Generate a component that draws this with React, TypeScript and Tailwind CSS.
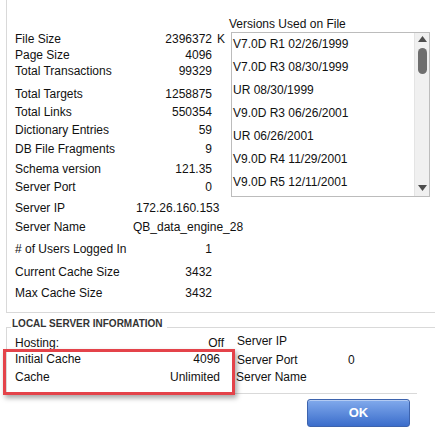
import React from "react";

type Stat = {
    label: string;
    value: string;
    unit?: string;
    mt: string;
    left?: string;
};

// file statistics, top-left column
const stats: Stat[] = [
    { label: "File Size", value: "2396372", unit: "K", mt: "mt-0" },
    { label: "Page Size", value: "4096", mt: "mt-0" },
    { label: "Total Transactions", value: "99329", mt: "mt-0" },
    { label: "Total Targets", value: "1258875", mt: "mt-[7px]" },
    { label: "Total Links", value: "550354", mt: "mt-[2px]" },
    { label: "Dictionary Entries", value: "59", mt: "mt-[2px]" },
    { label: "DB File Fragments", value: "9", mt: "mt-[3px]" },
    { label: "Schema version", value: "121.35", mt: "mt-[4px]" },
    { label: "Server Port", value: "0", mt: "mt-[2px]" },
    { label: "Server IP", value: "172.26.160.153", mt: "mt-[5px]", left: "pl-[2px]" },
    { label: "Server Name", value: "QB_data_engine_28", mt: "mt-[3px]", left: "-ml-[1px]" },
    { label: "# of Users Logged In", value: "1", mt: "mt-[6px]" },
    { label: "Current Cache Size", value: "3432", mt: "mt-[7px]" },
    { label: "Max Cache Size", value: "3432", mt: "mt-[5px]" },
];

const versions = [
    "V7.0D R1 02/26/1999",
    "V7.0D R3 08/30/1999",
    "UR 08/30/1999",
    "V9.0D R3 06/26/2001",
    "UR 06/26/2001",
    "V9.0D R4 11/29/2001",
    "V9.0D R5 12/11/2001",
];

function Scrollbar() {
    return (
        <div className="w-[15px] bg-[#f0f0f0] border-l border-[#e4e4e4] flex flex-col items-center pt-[3px] pb-[5px]">
            <svg width="9" height="6" viewBox="0 0 9 6">
                <path d="M4.5 0 L9 6 L0 6 Z" fill="#4d4d4d" />
            </svg>
            <div className="mt-[6px] w-[9px] h-[26px] rounded-full bg-[#6e6e6e]" />
            <div className="flex-1" />
            <svg width="9" height="6" viewBox="0 0 9 6">
                <path d="M0 0 L9 0 L4.5 6 Z" fill="#4d4d4d" />
            </svg>
        </div>
    );
}

export default function App() {
    return (
        <div className="relative w-[435px] h-[441px] overflow-hidden bg-white text-[12px] leading-4 text-[#111] font-['Liberation_Sans',Arial,sans-serif]">
            {/*file info group*/}
            <div className="ml-[6px] h-[313px] flex border-l border-b border-[#d9d9d9]">
                <div className="w-[222px] pl-[8px] pt-[31px]">
                    {stats.map((s) => (
                        <div key={s.label} className={`flex h-4 whitespace-nowrap ${s.mt}`}>
                            <span className="w-[119px] shrink-0">{s.label}</span>
                            {s.left ? (
                                <span className={s.left}>{s.value}</span>
                            ) : (
                                <span className="w-[78px] shrink-0 text-right">{s.value}</span>
                            )}
                            {s.unit && <span className="ml-[5px]">{s.unit}</span>}
                        </div>
                    ))}
                </div>

                {/*versions list*/}
                <div className="w-[201px] pt-[16px]">
                    <div className="h-4 whitespace-nowrap">Versions Used on File</div>
                    <div className="ml-[2px] h-[165px] flex border border-[#bcbcbc]">
                        <ul className="flex-1 pl-[1px] overflow-hidden">
                            {versions.map((v) => (
                                <li key={v} className="h-[23px] leading-[23px] whitespace-nowrap">{v}</li>
                            ))}
                        </ul>
                        <Scrollbar />
                    </div>
                </div>
            </div>
            {/*file info group end*/}

            {/*local server information*/}
            <div className="ml-[6px] h-[15px] flex items-end">
                <div className="w-[5px] border-b border-[#d9d9d9]" />
                <span className="ml-[1px] text-[10px] leading-[8px] font-bold text-[#333] whitespace-nowrap">
                    LOCAL SERVER INFORMATION
                </span>
                <div className="ml-[4px] flex-1 border-b border-[#d9d9d9]" />
            </div>
            <div className="ml-[6px] mr-[18px] h-[66px] flex border-l border-b border-[#d9d9d9]">
                <div className="w-[217px] pl-[8px] pt-[7px]">
                    <div className="flex h-4 justify-between">
                        <span>Hosting:</span>
                        <span>Off</span>
                    </div>
                    <div className="flex h-4 justify-between pr-[4px]">
                        <span>Initial Cache</span>
                        <span>4096</span>
                    </div>
                    <div className="flex h-4 justify-between pr-[4px] mt-[2px]">
                        <span>Cache</span>
                        <span>Unlimited</span>
                    </div>
                </div>
                <div className="ml-[13px] pt-[5px] whitespace-nowrap">
                    <div className="h-4">Server IP</div>
                    <div className="flex h-4 mt-[3px]">
                        <span className="w-[111px]">Server Port</span>
                        <span>0</span>
                    </div>
                    <div className="h-4 mt-[1px] -ml-[1px]">Server Name</div>
                </div>
            </div>
            {/*local server information end*/}

            <div className="flex justify-end pr-[25px] pt-[5px]">
                <button
                    type="button"
                    className="w-[103px] h-[28px] rounded-[3px] border border-[#3d63ad] bg-linear-to-b from-[#82aaec] to-[#3b6dcb] text-white text-[13px] font-bold shadow-[inset_0_1px_0_rgba(255,255,255,0.4)]"
                >
                    OK
                </button>
            </div>

            {/*highlight annotation*/}
            <div className="absolute left-[3px] top-[349px] w-[232px] h-[46px] border-[3px] border-[#e4434a] shadow-[2px_3px_5px_rgba(0,0,0,0.35)] pointer-events-none" />
        </div>
    );
}
